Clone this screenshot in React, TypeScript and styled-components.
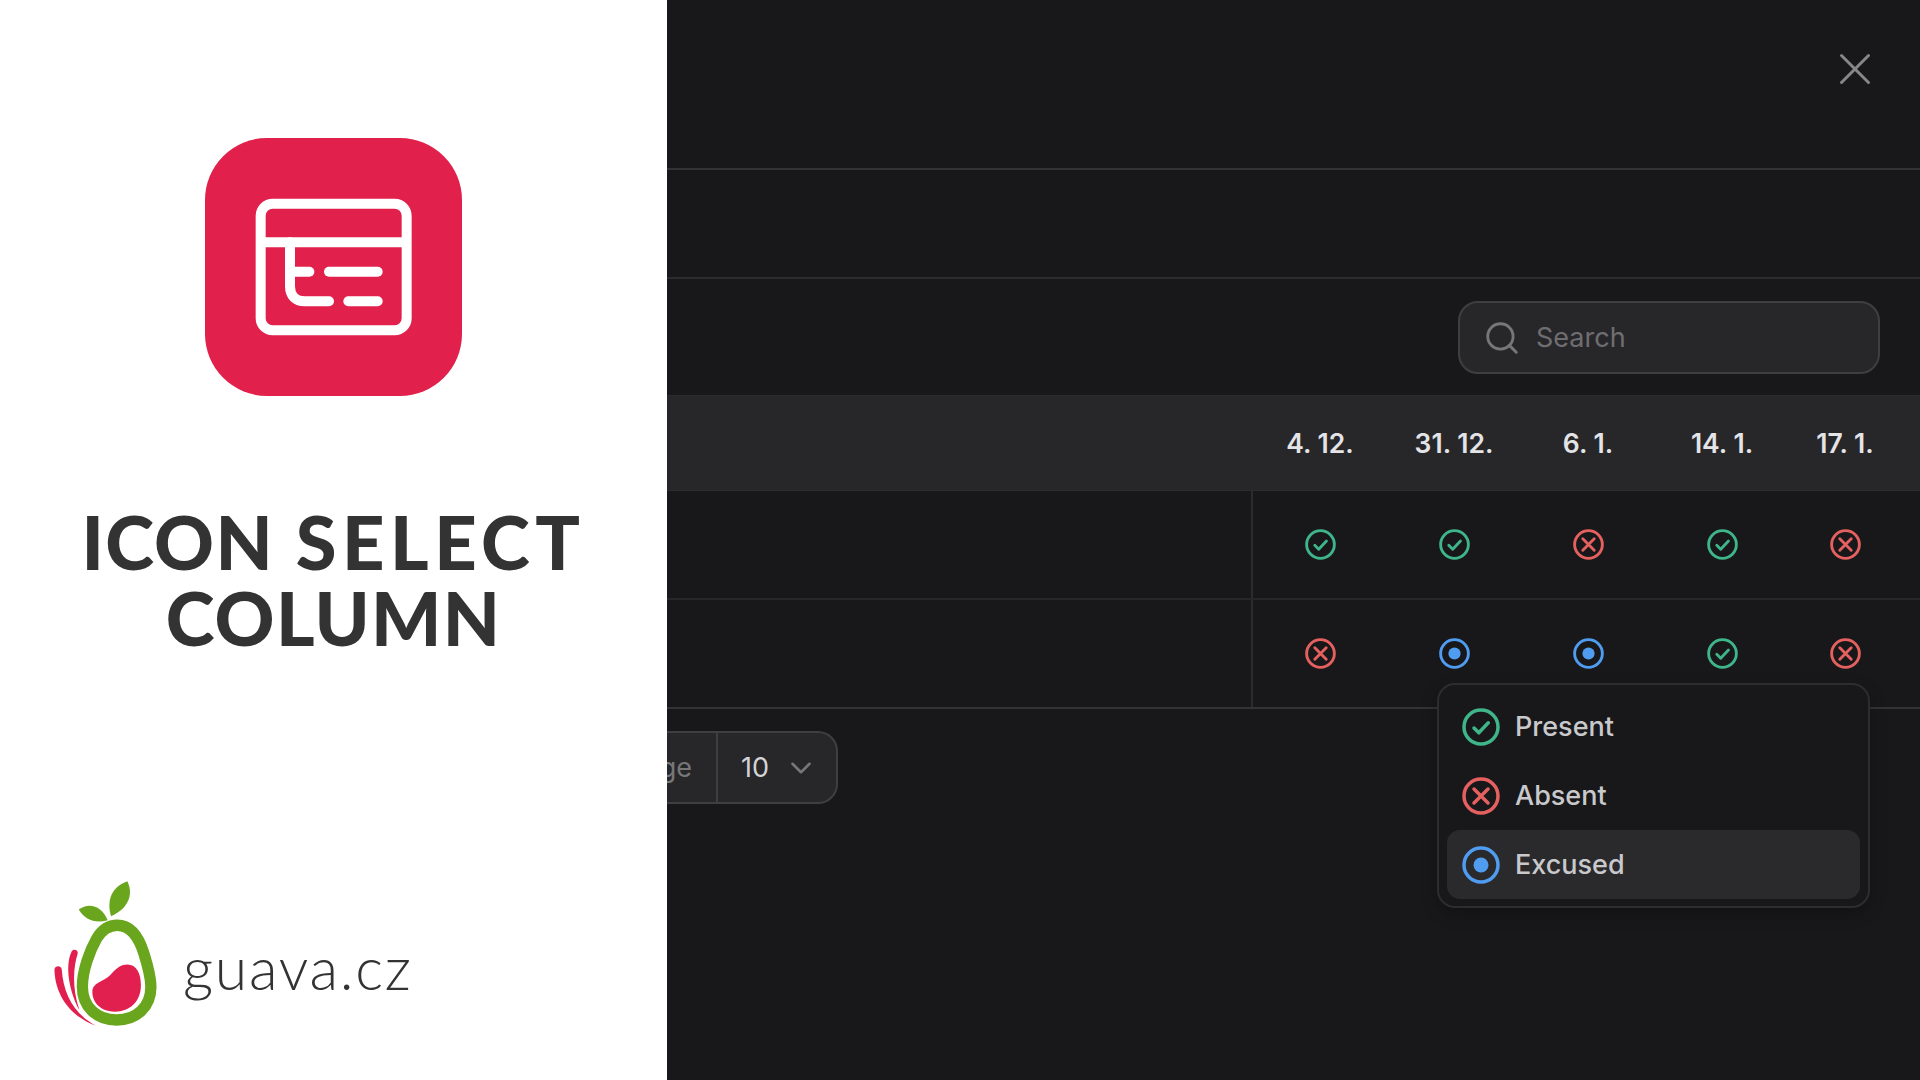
import React, { ReactElement } from 'react';
import styled, { createGlobalStyle } from 'styled-components';
import { ChevronDown, Search, X } from 'lucide-react';

type Status = 'present' | 'absent' | 'excused';

const statusColors: Record<Status, string> = {
  present: '#3fb58a',
  absent: '#e5615f',
  excused: '#4f9cf0',
};

const columns = ['4. 12.', '31. 12.', '6. 1.', '14. 1.', '17. 1.'];

const rows: Status[][] = [
  ['present', 'present', 'absent', 'present', 'absent'],
  ['absent', 'excused', 'excused', 'present', 'absent'],
];

const options: { status: Status; label: string }[] = [
  { status: 'present', label: 'Present' },
  { status: 'absent', label: 'Absent' },
  { status: 'excused', label: 'Excused' },
];

function StatusIcon({ status, size }: { status: Status; size: number }): ReactElement {
  const color = statusColors[status];
  return (
    <svg width={size} height={size} viewBox="0 0 38 38" fill="none" stroke={color} strokeWidth="3.500" strokeLinecap="round" strokeLinejoin="round">
      <circle cx="19" cy="19" r="17" />
      {status === 'present' && <path d="M12 20l4.800 4.800 9.500-10" />}
      {status === 'absent' && <path d="M12 12l14 14M26 12l-14 14" />}
      {status === 'excused' && <circle cx="19" cy="19" r="7.500" fill={color} stroke="none" />}
    </svg>
  );
}

function AppGlyph(): ReactElement {
  return (
    <svg width="100%" height="100%" viewBox="45 55 771 774" fill="none" stroke="#fff" strokeWidth="30" strokeLinecap="round">
      <rect x="212" y="252" width="438" height="380" rx="36" />
      <path d="M212 368H650" strokeLinecap="butt" />
      <path d="M300 368V500C300 528 316 545 344 545H417" />
      <path d="M300 456H358" />
      <path d="M417 456H563" />
      <path d="M475 545H563" />
    </svg>
  );
}

function GuavaMark(): ReactElement {
  return (
    <svg width="110" height="153" viewBox="30 20 330 460">
      <path d="M262 33C282 72 265 116 213 138C199 90 215 50 262 33Z" fill="#6aa51e" />
      <path d="M116 118C146 95 186 106 203 150C166 160 135 150 116 118Z" fill="#6aa51e" />
      <path
        d="M232 165C268 165 295 195 312 250C326 295 333 325 333 350C333 410 290 450 230 450C170 450 127 410 127 350C127 300 150 240 170 205C185 180 205 165 232 165Z"
        fill="#fff"
        stroke="#6aa51e"
        strokeWidth="34"
      />
      <path
        d="M262 283C290 283 303 310 303 345C303 395 270 425 225 425C185 425 157 400 157 365C157 335 195 335 215 310C230 293 245 283 262 283Z"
        fill="#e2204f"
      />
      <path d="M95 243C102 235 115 240 113 250C100 290 95 350 118 420C90 370 72 290 95 243Z" fill="#e2204f" />
      <path d="M43 298C45 285 63 285 65 298C70 370 100 430 167 467C95 440 45 380 43 298Z" fill="#e2204f" />
    </svg>
  );
}

function App(): ReactElement {
  return (
    <Page>
      <GlobalStyle />
      <PromoPanel>
        <AppTile>
          <AppGlyph />
        </AppTile>
        <Title>
          ICON <WideWord>SELECT</WideWord>
          <br />
          COLUMN
        </Title>
        <Brand>
          <GuavaMark />
          <Wordmark>guava.cz</Wordmark>
        </Brand>
      </PromoPanel>

      <DarkPanel>
        <TopBar>
          <X size={54} strokeWidth={1.3} color="#87878a" />
        </TopBar>
        <EmptyBar />
        <Toolbar>
          <SearchBox>
            <Search size={38} strokeWidth={1.8} color="#77777a" />
            <SearchInput placeholder="Search" />
          </SearchBox>
        </Toolbar>

        <HeaderRow>
          <span />
          {columns.map((column) => (
            <HeaderCell key={column}>{column}</HeaderCell>
          ))}
        </HeaderRow>
        {rows.map((row, index) => (
          <BodyRow key={index}>
            <NameCell />
            {row.map((status, cell) => (
              <IconCell key={cell}>
                <StatusIcon status={status} size={31} />
              </IconCell>
            ))}
          </BodyRow>
        ))}

        <Footer>
          <Pager>
            <PagerLabel>per page</PagerLabel>
            <PagerSelect>
              10
              <ChevronDown size={34} strokeWidth={1.8} color="#77777a" />
            </PagerSelect>
          </Pager>
        </Footer>

        <Menu>
          {options.map((option) => (
            <MenuItem key={option.status} $active={option.status === 'excused'}>
              <StatusIcon status={option.status} size={38} />
              {option.label}
            </MenuItem>
          ))}
        </Menu>
      </DarkPanel>
    </Page>
  );
}

const GlobalStyle = createGlobalStyle`
  html, body {
    margin: 0;
    padding: 0;
    background: #18181b;
  }

  * {
    box-sizing: border-box;
  }
`;

const Page = styled.div`
  display: flex;
  width: 1920px;
  height: 1080px;
  overflow: hidden;
  font-family: Inter, "Liberation Sans", sans-serif;
`;

const PromoPanel = styled.div`
  display: flex;
  flex-direction: column;
  align-items: center;
  flex: none;
  width: 667px;
  padding-top: 138px;
  background: #fff;
`;

const AppTile = styled.div`
  flex: none;
  width: 257px;
  height: 258px;
  border-radius: 62px;
  background: #e2204c;
`;

const Title = styled.h1`
  margin: 108px 0 0;
  font-family: Lato, "Liberation Sans", sans-serif;
  font-size: 74px;
  font-weight: 900;
  line-height: 76px;
  letter-spacing: 1.300px;
  word-spacing: 3px;
  text-align: center;
  color: #333;
`;

const WideWord = styled.span`
  letter-spacing: 5.500px;
`;

const Brand = styled.div`
  display: flex;
  align-items: flex-start;
  gap: 23px;
  align-self: flex-start;
  margin-top: auto;
  padding: 0 0 50px 50px;
`;

const Wordmark = styled.span`
  margin-top: 57px;
  font-family: Lato, "Liberation Sans", sans-serif;
  font-size: 59px;
  font-weight: 300;
  line-height: 68px;
  letter-spacing: 1.700px;
  color: #333;
`;

const DarkPanel = styled.div`
  position: relative;
  display: flex;
  flex-direction: column;
  flex: 1;
  min-width: 0;
  overflow: hidden;
  background: #18181b;
`;

const TopBar = styled.div`
  display: flex;
  justify-content: flex-end;
  flex: none;
  height: 170px;
  padding: 42px 38px 0 0;
  border-bottom: 2px solid #333336;
`;

const EmptyBar = styled.div`
  flex: none;
  height: 109px;
  border-bottom: 2px solid #2c2c2f;
`;

const Toolbar = styled.div`
  display: flex;
  justify-content: flex-end;
  flex: none;
  height: 116px;
  padding: 22px 40px 0 0;
`;

const SearchBox = styled.div`
  display: flex;
  align-items: center;
  gap: 15px;
  width: 422px;
  height: 73px;
  padding-left: 23px;
  border: 2px solid #3f3f42;
  border-radius: 20px;
  background: #27272a;
`;

const SearchInput = styled.input`
  flex: 1;
  min-width: 0;
  padding: 0;
  border: 0;
  outline: 0;
  background: none;
  font: 400 27px Inter, sans-serif;
  color: #d4d4d8;

  &::placeholder {
    color: #6e6e72;
    opacity: 1;
  }
`;

const HeaderRow = styled.div`
  display: grid;
  grid-template-columns: 1fr repeat(4, 134px) 112px;
  align-items: center;
  flex: none;
  height: 96px;
  padding-right: 19px;
  border-top: 1px solid #2c2c2f;
  border-bottom: 1px solid #2c2c2f;
  background: #27272a;
`;

const HeaderCell = styled.div`
  font-size: 26.500px;
  font-weight: 600;
  text-align: center;
  color: #e4e4e7;
`;

const BodyRow = styled.div`
  display: grid;
  grid-template-columns: 1fr repeat(4, 134px) 112px;
  flex: none;
  height: 109px;
  padding-right: 19px;
  border-bottom: 2px solid #27272a;

  &:nth-of-type(n + 6) {
    border-bottom-color: #333336;
  }
`;

const NameCell = styled.div`
  border-right: 2px solid #2c2c2f;
`;

const IconCell = styled.div`
  display: flex;
  align-items: center;
  justify-content: center;
`;

const Footer = styled.div`
  flex: none;
  width: 171px;
  padding-top: 22px;
`;

const Pager = styled.div`
  display: flex;
  justify-content: flex-end;
  height: 73px;
  border: 2px solid #3f3f42;
  border-left: 0;
  border-radius: 0 20px 20px 0;
  background: #27272a;
  font-size: 27px;
`;

const PagerLabel = styled.div`
  display: flex;
  align-items: center;
  flex: none;
  padding-right: 24px;
  border-right: 2px solid #3f3f42;
  white-space: nowrap;
  color: #77777a;
`;

const PagerSelect = styled.div`
  display: flex;
  align-items: center;
  gap: 15px;
  flex: none;
  width: 118px;
  padding-left: 23px;
  color: #d4d4d8;
`;

const Menu = styled.div`
  position: absolute;
  top: 683px;
  right: 50px;
  width: 433px;
  height: 225px;
  padding: 7px 8px 8px;
  border: 2px solid #2d2d30;
  border-radius: 18px;
  background: #18181b;
  box-shadow: 0 6px 16px rgba(0, 0, 0, 0.25);
`;

const MenuItem = styled.div<{ $active: boolean }>`
  display: flex;
  align-items: center;
  gap: 15px;
  height: 69px;
  padding-left: 15px;
  border-radius: 13px;
  background: ${(props) => (props.$active ? '#2a2a2d' : 'transparent')};
  font-size: 27px;
  font-weight: 500;
  color: #c9c9cc;
`;

export default App;
